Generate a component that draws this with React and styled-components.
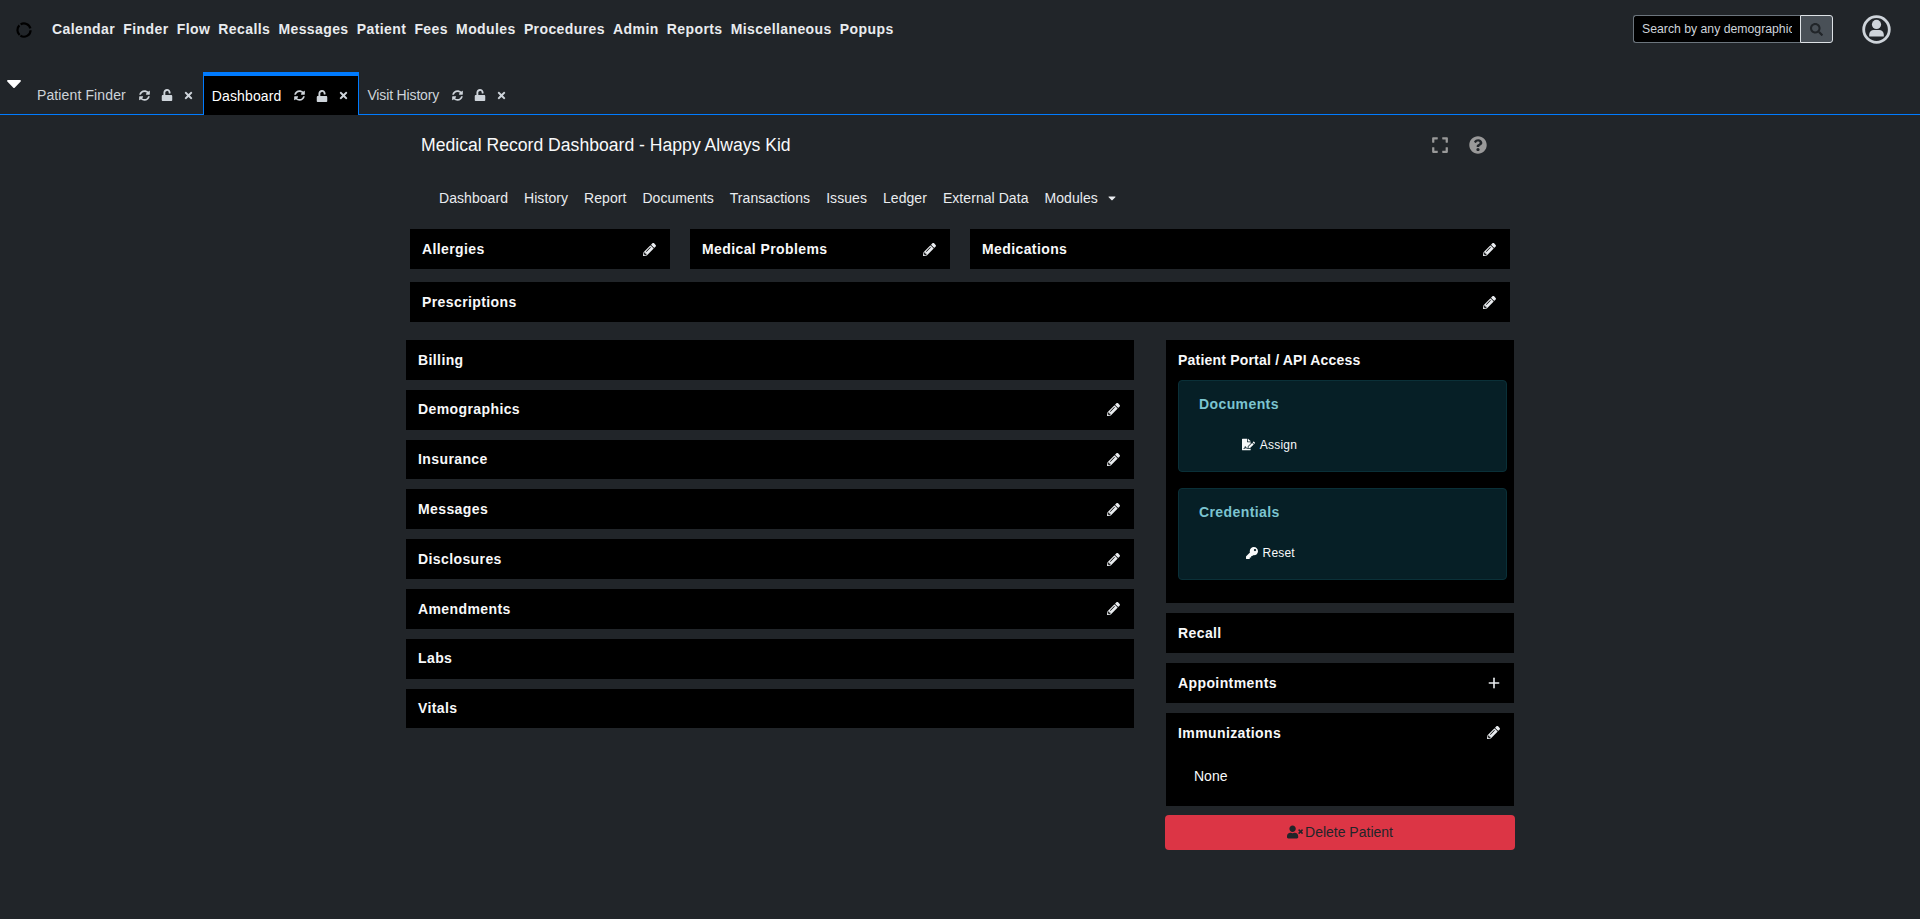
import { createGlobalStyle, styled } from "styled-components";
import { Plus } from "lucide-react";
import {
  FaCaretDown,
  FaExpand,
  FaFileSignature,
  FaKey,
  FaPencilAlt,
  FaQuestionCircle,
  FaSearch,
  FaSyncAlt,
  FaTimes,
  FaUnlock,
  FaUserTimes,
} from "react-icons/fa";

const menus = ["Calendar", "Finder", "Flow", "Recalls", "Messages", "Patient", "Fees", "Modules", "Procedures", "Admin", "Reports", "Miscellaneous", "Popups"];
const tabs = [
  { name: "Patient Finder", spacing: "0.12px" },
  { name: "Dashboard", spacing: "0.12px", active: true },
  { name: "Visit History", spacing: "-0.15px" },
];
const links = ["Dashboard", "History", "Report", "Documents", "Transactions", "Issues", "Ledger", "External Data"];
const leftCards = [
  { name: "Billing" },
  { name: "Demographics", edit: true },
  { name: "Insurance", edit: true },
  { name: "Messages", edit: true },
  { name: "Disclosures", edit: true },
  { name: "Amendments", edit: true },
  { name: "Labs" },
  { name: "Vitals" },
];

const App = () => {
  return (
    <>
      <GlobalStyle />
      <Header>
        <Logo viewBox="0 0 16 16">
          <path d="M4.6 2.4 A6.6 6.6 0 0 1 14.4 6.4" />
          <path d="M14.6 8.2 A6.6 6.6 0 0 1 4.4 13.6" />
          <path d="M3.6 13 A6.6 6.6 0 0 1 3.4 3.4" />
        </Logo>
        <Menu>
          {menus.map((item) => (
            <MenuItem key={item}>{item}</MenuItem>
          ))}
        </Menu>
        <Search>
          <SearchInput readOnly placeholder="Search by any demographics" />
          <SearchButton>
            <FaSearch />
          </SearchButton>
        </Search>
        <Avatar viewBox="0 0 29 29">
          <circle cx="14.5" cy="14.5" r="12.8" fill="none" stroke="currentColor" strokeWidth="2.8" />
          <circle cx="14.5" cy="9.4" r="4.6" fill="currentColor" />
          <path d="M7.2 21.6 V19.6 a4.6 4.6 0 0 1 4.6-4.6 h5.4 a4.6 4.6 0 0 1 4.6 4.6 v2 z" fill="currentColor" />
        </Avatar>
      </Header>

      <TabBar>
        <TabToggle>
          <FaCaretDown />
        </TabToggle>
        {tabs.map((tab) => (
          <Tab key={tab.name} $active={tab.active}>
            <TabName $active={tab.active} $spacing={tab.spacing}>
              {tab.name}
            </TabName>
            <TabIcon>
              <FaSyncAlt />
            </TabIcon>
            <TabIcon $size="12px">
              <FaUnlock />
            </TabIcon>
            <TabIcon>
              <FaTimes />
            </TabIcon>
          </Tab>
        ))}
      </TabBar>

      <Main>
        <TitleRow>
          <Title>Medical Record Dashboard - Happy Always Kid</Title>
          <TitleIcons>
            <FaExpand />
            <HelpIcon>
              <FaQuestionCircle />
            </HelpIcon>
          </TitleIcons>
        </TitleRow>

        <SubNav>
          {links.map((link) => (
            <SubLink key={link}>{link}</SubLink>
          ))}
          <SubLink>
            Modules <FaCaretDown />
          </SubLink>
        </SubNav>

        <TopCards>
          <TopCard>
            <CardTitle>Allergies</CardTitle>
            <Edit>
              <FaPencilAlt />
            </Edit>
          </TopCard>
          <TopCard>
            <CardTitle>Medical Problems</CardTitle>
            <Edit>
              <FaPencilAlt />
            </Edit>
          </TopCard>
          <TopCard $grow="1">
            <CardTitle>Medications</CardTitle>
            <Edit>
              <FaPencilAlt />
            </Edit>
          </TopCard>
          <TopCard $grow="0 0 100%">
            <CardTitle>Prescriptions</CardTitle>
            <Edit>
              <FaPencilAlt />
            </Edit>
          </TopCard>
        </TopCards>

        <Columns>
          <LeftColumn>
            {leftCards.map((card) => (
              <CardHead key={card.name}>
                <CardTitle>{card.name}</CardTitle>
                {card.edit && (
                  <Edit>
                    <FaPencilAlt />
                  </Edit>
                )}
              </CardHead>
            ))}
          </LeftColumn>

          <RightColumn>
            <PortalCard>
              <PortalTitle>Patient Portal / API Access</PortalTitle>
              <Notice>
                <NoticeTitle>Documents</NoticeTitle>
                <NoticeAction>
                  <FaFileSignature /> Assign
                </NoticeAction>
              </Notice>
              <Notice>
                <NoticeTitle>Credentials</NoticeTitle>
                <NoticeAction $short>
                  <FaKey /> Reset
                </NoticeAction>
              </Notice>
            </PortalCard>
            <CardHead>
              <CardTitle>Recall</CardTitle>
            </CardHead>
            <CardHead>
              <CardTitle>Appointments</CardTitle>
              <Edit>
                <PlusIcon size={16} strokeWidth={2.4} />
              </Edit>
            </CardHead>
            <BodyCard>
              <CardHead>
                <CardTitle>Immunizations</CardTitle>
                <Edit>
                  <FaPencilAlt />
                </Edit>
              </CardHead>
              <BodyText>None</BodyText>
            </BodyCard>
            <DeleteButton>
              <FaUserTimes /> Delete Patient
            </DeleteButton>
          </RightColumn>
        </Columns>
      </Main>
    </>
  );
};

export default App;

const GlobalStyle = createGlobalStyle`
  html, body {
    margin: 0;
    min-height: 100%;
    background-color: #212529;
    color: #fff;
    font-family: "Liberation Sans", Arial, sans-serif;
    font-size: 14px;
  }
`;

const Header = styled.header`
  display: flex;
  align-items: flex-start;
  height: 72px;
  padding: 15px 29px 0 16px;
  box-sizing: border-box;
`;

const Logo = styled.svg`
  width: 16px;
  height: 16px;
  margin: 7px 20px 0 0;
  fill: none;
  stroke: #000;
  stroke-width: 2.2;
`;

const Menu = styled.nav`
  display: flex;
  gap: 8.2px;
  flex: 1;
  height: 28px;
  align-items: center;
`;

const MenuItem = styled.a`
  color: #e9ecef;
  font-weight: 700;
  letter-spacing: 0.4px;
`;

const Search = styled.div`
  display: flex;
  width: 200px;
  height: 28px;
  margin-right: 29px;
`;

const SearchInput = styled.input`
  flex: 1;
  min-width: 0;
  box-sizing: border-box;
  background: #000;
  font-family: inherit;
  font-size: 12.25px;
  padding: 0 8px;
  border: 1px solid #6c757d;
  border-right: 0;
  border-radius: 3px 0 0 3px;
  outline: 0;

  &::placeholder {
    color: #ced4da;
    opacity: 1;
  }
`;

const SearchButton = styled.div`
  display: flex;
  align-items: center;
  justify-content: center;
  width: 33px;
  box-sizing: border-box;
  background: #495057;
  color: #212529;
  font-size: 13px;
  border: 1px solid #dee2e6;
  border-radius: 0 3px 3px 0;
`;

const Avatar = styled.svg`
  width: 29px;
  height: 29px;
  color: #ced4da;
`;

const TabBar = styled.div`
  display: flex;
  align-items: flex-start;
  height: 42px;
  border-bottom: 1px solid #007bff;
`;

const TabToggle = styled.div`
  width: 29px;
  padding: 1px 0 0 2px;
  box-sizing: border-box;
  color: #fff;
  font-size: 24px;
  line-height: 0;

  svg {
    margin-top: -2px;
  }
`;

const Tab = styled.div`
  display: flex;
  align-items: center;
  gap: 11px;
  height: 43px;
  box-sizing: border-box;
  padding: ${(p) => (p.$active ? "0 9px 0 8px" : "4px 9px 1px 8px")};
  background: ${(p) => (p.$active ? "#000" : "transparent")};
  border-style: solid;
  border-color: #007bff;
  border-width: ${(p) => (p.$active ? "4px 1px 0" : "0")};
`;

const TabName = styled.span`
  color: ${(p) => (p.$active ? "#fff" : "#ced4da")};
  letter-spacing: ${(p) => p.$spacing};
  margin-right: 2px;
`;

const TabIcon = styled.span`
  display: inline-flex;
  color: #ced4da;
  font-size: ${(p) => p.$size || "11px"};

  &:last-child {
    margin-left: -1px;
  }
`;

const Main = styled.main`
  width: 1110px;
  margin: 0 auto;
`;

const TitleRow = styled.div`
  display: flex;
  align-items: center;
  justify-content: space-between;
  padding: 19px 28px 0 16px;
`;

const Title = styled.h1`
  margin: 0;
  font-size: 17.6px;
  font-weight: 400;
  line-height: 22px;
  color: #f8f9fa;
`;

const TitleIcons = styled.div`
  display: flex;
  align-items: center;
  gap: 20px;
  color: #999;
  font-size: 18px;
`;

const HelpIcon = styled.span`
  display: inline-flex;
  font-size: 18px;
`;

const SubNav = styled.nav`
  display: flex;
  gap: 16px;
  padding: 32px 0 0 34px;
  height: 20px;
  align-items: center;
`;

const SubLink = styled.a`
  color: #e9ecef;
  letter-spacing: 0.06px;

  svg {
    margin-left: 4px;
    vertical-align: -1px;
    font-size: 12px;
  }
`;

const CardHead = styled.div`
  display: flex;
  align-items: center;
  justify-content: space-between;
  min-height: 39.8px;
  padding: 0 14px 0 12px;
  box-sizing: border-box;
  background: #000;
`;

const TopCard = styled(CardHead)`
  flex: ${(p) => p.$grow || "0 0 260px"};
  min-height: 40px;
`;

const CardTitle = styled.h6`
  margin: -0.6px 0 0;
  font-size: 14px;
  line-height: 16px;
  font-weight: 700;
  letter-spacing: 0.4px;
  color: #f8f9fa;
`;

const PortalTitle = styled(CardTitle)`
  margin: 0;
  letter-spacing: 0.2px;
`;

const Edit = styled.span`
  display: inline-flex;
  color: #e9ecef;
  font-size: 13px;
`;

const PlusIcon = styled(Plus)`
  margin-right: -1.5px;
`;

const TopCards = styled.div`
  display: flex;
  flex-wrap: wrap;
  gap: 13px 20px;
  padding: 21px 5px 0;
`;

const Columns = styled.div`
  display: flex;
  justify-content: space-between;
  align-items: flex-start;
  padding: 18px 0 0 1px;
`;

const LeftColumn = styled.div`
  display: flex;
  flex-direction: column;
  gap: 10px;
  width: 728px;
`;

const RightColumn = styled.div`
  display: flex;
  flex-direction: column;
  gap: 10px;
  width: 350px;

  > div {
    min-height: 40px;
    margin: 0 1px;
  }
`;

const PortalCard = styled.div`
  display: flex;
  flex-direction: column;
  background: #000;
  height: 263px;
  padding: 12px 7px 0 12px;
  box-sizing: border-box;
`;

const Notice = styled.div`
  margin-top: 16px;
  height: 92px;
  box-sizing: border-box;
  padding: 15px 20px;
  background: #061f26;
  border: 1px solid #0a3038;
  border-radius: 4px;

  &:first-of-type {
    margin-top: 12px;
  }
`;

const NoticeTitle = styled.h6`
  margin: 0;
  font-size: 14px;
  line-height: 16px;
  font-weight: 700;
  letter-spacing: 0.4px;
  color: #7bc4d0;
`;

const NoticeAction = styled.div`
  margin-top: 26px;
  padding-left: ${(p) => (p.$short ? "47px" : "43px")};
  color: #f8f9fa;
  font-size: 12px;
  line-height: 14px;
  letter-spacing: 0.2px;

  svg {
    font-size: ${(p) => (p.$short ? "12px" : "13px")};
    vertical-align: -2px;
    margin-right: ${(p) => (p.$short ? "1px" : "2px")};
  }
`;

const BodyCard = styled.div`
  display: flex;
  flex-direction: column;
  height: 93px;
  background: #000;
`;

const BodyText = styled.div`
  padding: 15px 28px;
  line-height: 16px;
  color: #f8f9fa;
`;

const DeleteButton = styled.button`
  display: flex;
  align-items: center;
  justify-content: center;
  gap: 2px;
  height: 35px;
  margin-top: -1px;
  padding: 0 0 1px;
  border: 0;
  border-radius: 4px;
  background: #dc3545;
  color: #212529;
  font-family: inherit;
  font-size: 14px;

  svg {
    font-size: 16px;
  }
`;
